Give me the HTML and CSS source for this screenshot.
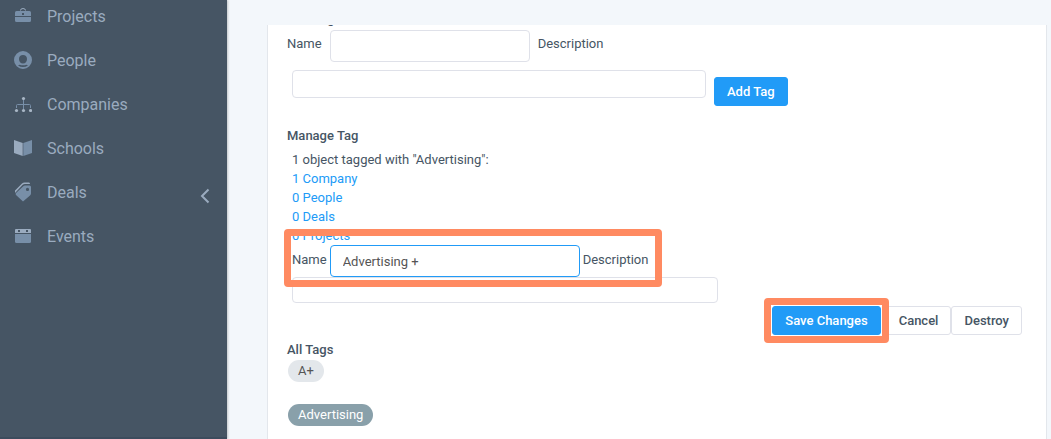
FILE: index.html
```html
<!DOCTYPE html>
<html lang="en">
<head>
  <meta charset="UTF-8">
  <meta name="viewport" content="width=device-width, initial-scale=1.0">
  <title>Tags</title>
  <link rel="stylesheet" href="styles.css">
</head>
<body>
  <div class="layout">
    <nav class="sidebar">
      <ul class="menu">
        <li><a href="#">
          <svg class="icon" viewBox="0 0 18 20"><path fill="none" stroke="#9aabbf" d="M6.500 4.500Q6.500 2.500 9 2.500T11.500 4.500"/><path d="M2.500 5h13A1.500 1.500 0 0 1 17 6.500V10H1V6.500A1.500 1.500 0 0 1 2.500 5zM1 11h16v3.500a1.500 1.500 0 0 1-1.500 1.500h-13A1.500 1.500 0 0 1 1 14.500z"/><path fill="#465564" d="M8 7h2v2H8z"/></svg>
          Projects</a></li>
        <li><a href="#">
          <svg class="icon" viewBox="0 0 18 20"><path fill-rule="evenodd" d="M9 1a9 9 0 1 1 0 18A9 9 0 0 1 9 1zm0 4C6.500 5 5 6.500 5 9s1.500 4.500 4 4.500 4-2 4-4.500S11.500 5 9 5zM4 15.500q5 3 10 0l-1.500-.8q-3.500 1-7 0z"/></svg>
          People</a></li>
        <li><a href="#">
          <svg class="icon" viewBox="0 0 18 20"><path fill="none" stroke="#788fa8" d="M9.500 5v10M2.500 14v-2.500q0-1 1-1h12q1 0 1 1V14"/><g fill="#a9b7c6"><circle cx="9.500" cy="4.500" r="1.600"/><circle cx="2.500" cy="16.500" r="1.600"/><circle cx="9.500" cy="16.500" r="1.600"/><circle cx="16.500" cy="16.500" r="1.600"/></g></svg>
          Companies</a></li>
        <li><a href="#">
          <svg class="icon" viewBox="0 0 18 20"><path fill="#9aabbf" d="M0 2l8.700 3v13L0 15z"/><path d="M9.300 5L18 2v13l-8.700 3z"/></svg>
          Schools</a></li>
        <li><a href="#">
          <svg class="icon" viewBox="0 0 18 20"><path fill="#9aabbf" d="M1 11V8.500L8 1.500Q9 .5 10.500 .5H15q1 0 1 1.500h-5Q9.500 2 8.500 3z"/><path fill-rule="evenodd" d="M11 3.500h4.500Q17 3.500 17 5v6.500q0 1-1 2L9 19.500l-7-6.500q-.8-1 0-2L9 4.500q1-1 2-1zm2.500 2.300a1.600 1.600 0 1 0 0 3.200 1.600 1.600 0 0 0 0-3.200z"/></svg>
          Deals
          <svg class="arrow" viewBox="0 0 10 16"><path fill="none" stroke="#9aabbf" stroke-width="2" d="M8.500 1.500L2 8l6.500 6.500"/></svg></a></li>
        <li><a href="#">
          <svg class="icon" viewBox="0 0 18 20"><path fill="#9aabbf" d="M2 3h14a1 1 0 0 1 1 1v3H1V4a1 1 0 0 1 1-1z"/><path d="M1 8h16v7.500a1.500 1.500 0 0 1-1.500 1.500h-13A1.500 1.500 0 0 1 1 15.500z"/><path fill="#465564" d="M4 4h2v2H4zM12 4h2v2h-2z"/></svg>
          Events</a></li>
      </ul>
    </nav>

    <main class="content">
      <div class="panel">
        <form class="add-form">
          <h3>Add Tag</h3>
          <div class="row">
            <label for="new-name">Name</label>
            <input type="text" id="new-name" class="name">
            <label for="new-description">Description</label>
          </div>
          <div class="row description-row">
            <input type="text" id="new-description" class="description">
            <button type="button" class="btn primary">Add Tag</button>
          </div>
        </form>

        <form class="manage-form">
          <h3>Manage Tag</h3>
          <div class="tag-details">
            <p>1 object tagged with "Advertising":</p>
            <ul class="links">
              <li><a href="#">1 Company</a></li>
              <li><a href="#">0 People</a></li>
              <li><a href="#">0 Deals</a></li>
              <li><a href="#">0 Projects</a></li>
            </ul>
            <div class="row edit-row">
              <label for="edit-name">Name</label>
              <input type="text" id="edit-name" class="name active" value="Advertising +">
              <label for="edit-description">Description</label>
              <span class="highlight"></span>
            </div>
            <input type="text" id="edit-description" class="description">
          </div>
          <div class="actions">
            <span class="save">
              <button type="button" class="btn primary">Save Changes</button>
              <span class="highlight"></span>
            </span>
            <button type="button" class="btn">Cancel</button>
            <button type="button" class="btn">Destroy</button>
          </div>
        </form>

        <section class="all-tags">
          <h3>All Tags</h3>
          <a href="#" class="tag">A+</a>
          <a href="#" class="tag selected">Advertising</a>
        </section>
      </div>
    </main>
  </div>
</body>
</html>
```

FILE: styles.css
```css
* {
  box-sizing: border-box;
}

body {
  margin: 0;
  font-family: Roboto, "Liberation Sans", sans-serif;
  font-size: 13px;
  line-height: 19px;
  color: #465564;
  background-color: #f3f7fb;
}

ul {
  list-style: none;
  margin: 0;
  padding: 0;
}

a {
  color: #219bf7;
  text-decoration: none;
}

h3, p {
  margin: 0;
}

h3 {
  font-size: 13px;
  font-weight: 500;
}

.layout {
  display: flex;
  height: 100vh;
  overflow: hidden;
}

/* Sidebar */
.sidebar {
  flex: 0 0 227px;
  background-color: #465564;
  border-bottom: 2px solid #3d4c5d;
  box-shadow: 1px 0 2px rgba(0, 0, 0, 0.2);
}

.menu {
  margin-top: -6px;
}

.menu a {
  display: flex;
  align-items: center;
  gap: 15px;
  height: 44px;
  padding: 0 17px 0 14px;
  font-size: 16px;
  color: #9aabbf;
}

.icon {
  width: 18px;
  height: 20px;
  fill: #788fa8;
}

.arrow {
  width: 10px;
  height: 16px;
  margin: 8px 0 0 auto;
}

/* Content */
.content {
  flex: 1;
  display: flex;
  min-width: 0;
  padding: 25px 4px 0 40px;
}

.panel {
  flex: 1;
  min-width: 0;
  padding: 0 24px 0 19px;
  background-color: #fff;
  border: solid #e3e7ec;
  border-width: 0 1px;
  overflow: hidden;
}

.row {
  display: flex;
  align-items: center;
  gap: 8px;
}

input {
  height: 28px;
  padding: 0 12px;
  border: 1px solid #dfe1e9;
  border-radius: 4px;
  background-color: #fff;
  color: #555;
  font: inherit;
  outline: none;
}

input.name {
  width: 200px;
  height: 32px;
}

input.active {
  width: 250px;
  border-color: #219bf7;
}

/* the heading is scrolled under the top edge of the panel */
.add-form h3 {
  margin: -16px 0 2px;
}

.add-form label {
  margin-bottom: 5px;
}

.description-row {
  align-items: flex-start;
  margin: 8px 0 0 5px;
}

.description-row .description {
  flex: 0 1 414px;
}

.description-row .btn {
  margin-top: 7px;
}

.btn {
  height: 29px;
  padding: 0 12px;
  border: 1px solid #dfe1e9;
  border-radius: 3px;
  background-color: #fff;
  color: #465564;
  font: inherit;
  font-weight: 500;
  cursor: pointer;
}

.btn.primary {
  border-color: #219bf7;
  background-color: #219bf7;
  color: #fff;
}

.manage-form {
  margin-top: 20px;
}

.tag-details {
  margin: 5px 0 0 5px;
}

.edit-row {
  position: relative;
  width: fit-content;
  gap: 3px;
}

.edit-row label {
  margin-bottom: 3px;
}

.tag-details > .description {
  display: block;
  width: 426px;
  height: 26px;
}

/* Orange frames around the steps to follow */
.highlight {
  position: absolute;
  z-index: 1;
  inset: -16px -14px -10px -8px;
  border: 7px solid #ff8a61;
  border-radius: 4px;
  pointer-events: none;
}

.save {
  position: relative;
  display: flex;
  margin-right: 5px;
}

.save .highlight {
  inset: -8px;
  box-shadow: inset 0 0 0 1px #fff;
}

.actions {
  display: flex;
  justify-content: flex-end;
  margin-top: 3px;
}

.all-tags {
  display: flex;
  flex-direction: column;
  align-items: flex-start;
  margin-top: 5px;
}

.tag {
  margin: 1px 0 21px 1px;
  padding: 0 10px;
  border-radius: 11px;
  line-height: 22px;
  background-color: #e3e7eb;
  color: #555;
}

.tag.selected {
  background-color: #89a0aa;
  color: #fff;
}
```
